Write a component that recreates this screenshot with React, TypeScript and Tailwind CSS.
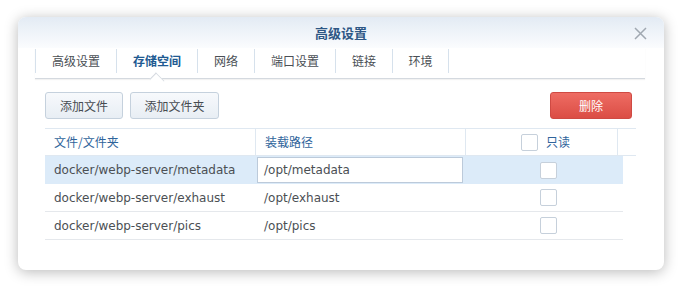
import React from "react";

const cjk = { fontFamily: '"Noto Sans CJK SC", "Noto Sans", sans-serif' };
const latin = { fontFamily: '"DejaVu Sans", "Noto Sans CJK SC", sans-serif' };

function Checkbox() {
  return <div className="w-[17px] h-[17px] rounded-[2px] border border-[#c6d0db] bg-white" />;
}

export default function App() {
  const tabs = [
    { label: "高级设置", w: "w-[81px]" },
    { label: "存储空间", w: "w-[81px]", active: true },
    { label: "网络", w: "w-[57px]" },
    { label: "端口设置", w: "w-[81px]" },
    { label: "链接", w: "w-[57px]" },
    { label: "环境", w: "w-[57px]" },
  ];
  const rows = [
    { f: "docker/webp-server/metadata", p: "/opt/metadata", sel: true },
    { f: "docker/webp-server/exhaust", p: "/opt/exhaust" },
    { f: "docker/webp-server/pics", p: "/opt/pics" },
  ];
  return (
    <div className="w-[682px] h-[289px] bg-white overflow-hidden pt-[17px] pl-[18px]" style={cjk}>
      <div className="w-[646px] h-[253px] rounded-[8px] bg-white shadow-[0_2px_14px_rgba(0,0,0,0.28)] flex flex-col overflow-hidden">
        {/* title */}
        <div className="relative h-[31px] flex items-center justify-center bg-gradient-to-b from-[#e3ebf4] to-[#fbfcfe]">
          <span className="text-[13px] font-bold text-[#2e5785] leading-none">高级设置</span>
          <svg className="absolute right-[17px] top-[10px]" width="13" height="13" viewBox="0 0 13 13">
            <path d="M1 1 L12 12 M12 1 L1 12" stroke="#a0a8b1" strokeWidth="1.5" />
          </svg>
        </div>
        {/* tabs */}
        <div className="ml-[17px] mr-[19px] h-[31px] border-b border-[#d4d9df] shadow-[0_1px_1px_rgba(0,0,0,0.05)] flex items-start">
          {tabs.map((t, i) => (
            <div
              key={i}
              className={`relative ${t.w} mt-[1px] h-[24px] border-l border-[#d6e1ec] ${i === tabs.length - 1 ? "border-r" : ""} flex items-center justify-center text-[12px] ${t.active ? "text-[#215a91] font-bold" : "text-[#4a4f55]"}`}
            >
              {t.label}
              {t.active && (
                <div className="absolute left-1/2 top-[25px] -ml-[6px] w-[12px] h-[12px] rotate-45 scale-y-75 bg-white border-l border-t border-[#d4d9df]" />
              )}
            </div>
          ))}
        </div>
        {/* buttons */}
        <div className="mt-[13px] ml-[27px] mr-[32px] flex items-center gap-[7px]">
          <button className="h-[27px] w-[78px] rounded-[3px] border border-[#c5d1dd] bg-gradient-to-b from-[#f7f9fc] to-[#e8eef4] text-[12px] text-[#464b51]">添加文件</button>
          <button className="h-[27px] w-[89px] rounded-[3px] border border-[#c5d1dd] bg-gradient-to-b from-[#f7f9fc] to-[#e8eef4] text-[12px] text-[#464b51]">添加文件夹</button>
          <div className="flex-1" />
          <button className="h-[27px] w-[82px] rounded-[3px] border border-[#cf4a43] bg-gradient-to-b from-[#ee6c63] to-[#db4d45] text-[12px] text-white">删除</button>
        </div>
        {/* table */}
        <div className="mt-[9px] ml-[27px] w-[591px]">
          <div className="flex h-[28px] border-t border-b border-[#dfe8f1] text-[12px] text-[#2f649b]">
            <div className="w-[210px] flex items-center pl-[9px]">文件/文件夹</div>
            <div className="w-[210px] flex items-center pl-[9px] border-l border-[#dfe8f1]">装载路径</div>
            <div className="w-[153px] flex items-center justify-center gap-[8px] border-l border-r border-[#dfe8f1] pl-[8px]">
              <Checkbox />
              <span>只读</span>
            </div>
          </div>
          <div className="w-[578px]">
            {rows.map((r, i) => (
              <div
                key={i}
                className={`flex h-[28px] text-[12px] text-[#4b4f54] ${r.sel ? "bg-[#dcebf9]" : "border-b border-[#e5e8ec]"}`}
                style={latin}
              >
                <div className="w-[210px] flex items-center pl-[9px]">{r.f}</div>
                <div className="w-[210px] flex items-center">
                  {r.sel ? (
                    <div className="ml-[2px] w-[206px] h-[26px] bg-white border border-[#bccada] flex items-center pl-[6px]">{r.p}</div>
                  ) : (
                    <span className="pl-[9px]">{r.p}</span>
                  )}
                </div>
                <div className="w-[158px] flex items-center justify-center pl-[8px]">
                  <Checkbox />
                </div>
              </div>
            ))}
          </div>
        </div>
      </div>
    </div>
  );
}
